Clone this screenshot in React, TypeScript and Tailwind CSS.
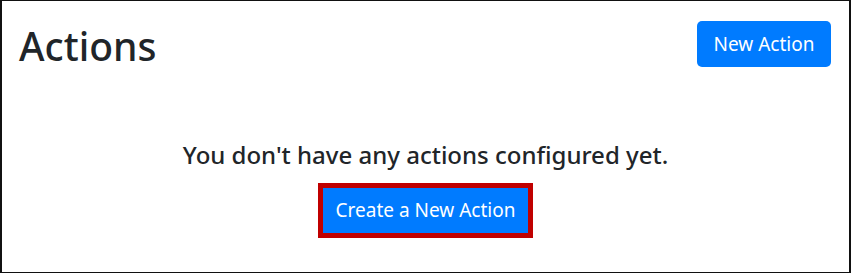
export default function App() {
  return (
    <div
      className="w-[851px] h-[273px] bg-white border-t border-b border-l-2 border-r-2 border-[#111] text-[#212529] flex flex-col"
      style={{ fontFamily: '"Noto Sans", "Open Sans", sans-serif' }}
    >
      <div className="flex items-start justify-between pl-[17px] pr-[18px] pt-5">
        <h1 className="text-[39px] leading-[48px] font-medium mt-[1px]">Actions</h1>
        <button className="w-[134px] h-[46px] rounded-[5px] bg-[#007bff] text-white text-[19px]">
          New Action
        </button>
      </div>
      <div className="flex flex-col items-center mt-[70px]">
        <p className="text-[24px] leading-[30px] font-medium">
          You don't have any actions configured yet.
        </p>
        <div className="mt-[13px] border-[5px] border-[#c00000]">
          <button className="w-[205px] h-[45px] bg-[#007bff] text-white text-[19px]">
            Create a New Action
          </button>
        </div>
      </div>
    </div>
  )
}
